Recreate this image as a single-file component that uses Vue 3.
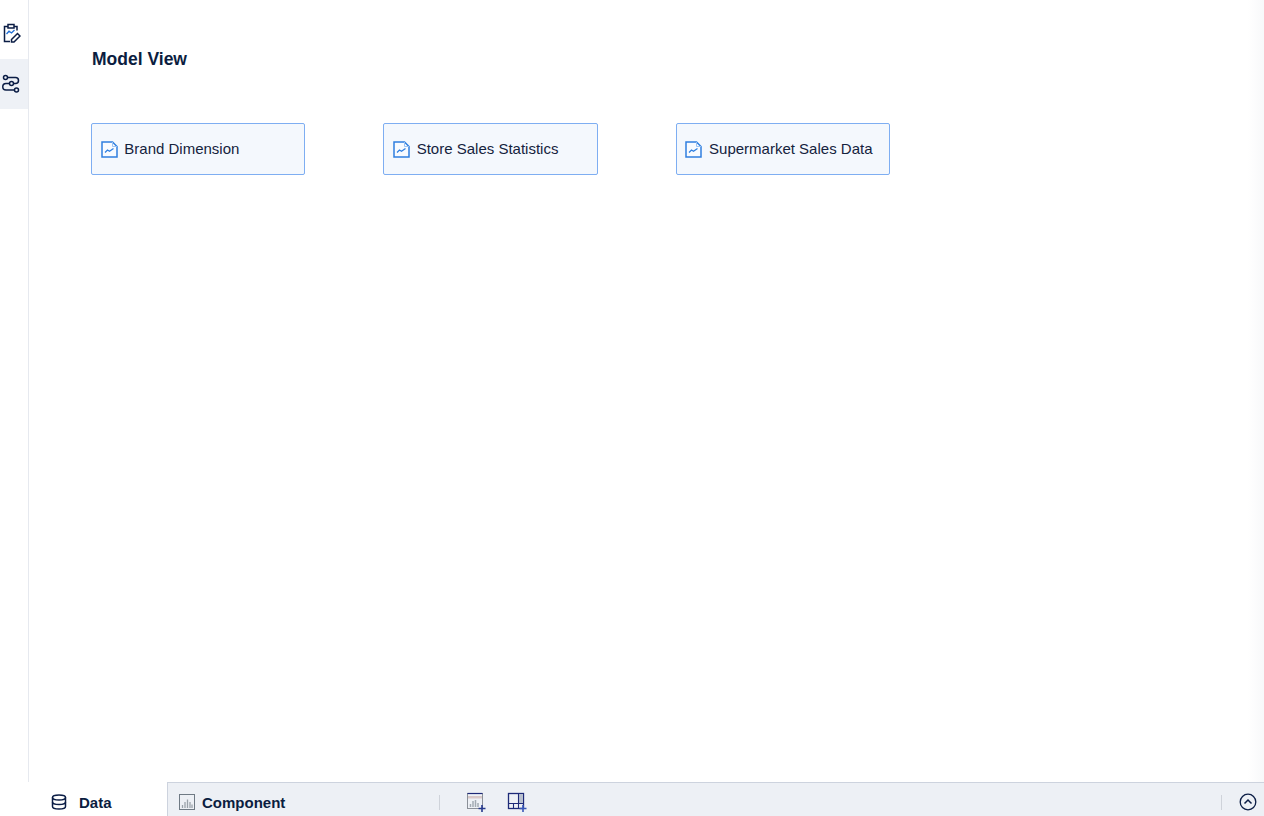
<script setup>
const models = ['Brand Dimension', 'Store Sales Statistics', 'Supermarket Sales Data']
</script>

<template>
  <div class="page">
    <div class="main">
      <aside class="side">
        <div class="side-item top">
          <svg width="20" height="20" viewBox="0 0 20 20" fill="none" stroke="#0b1d45" stroke-width="1.500">
            <path d="M7 3.500H3.500V18.500H9" />
            <path d="M13 3.500H16V7.500" />
            <rect x="7" y="1.500" width="6" height="3.500" />
            <path d="M5.500 11L8 8.200L10.500 10L13.500 7" stroke="#1f6fd6" stroke-width="1.300" />
            <path d="M10.500 16.500L16.500 10.500L19 13L13 19H10.500Z" />
          </svg>
        </div>
        <div class="side-item active">
          <svg width="20" height="20" viewBox="0 0 20 20" fill="none" stroke="#0b1d45" stroke-width="1.500">
            <circle cx="4.500" cy="3.500" r="2" />
            <path d="M6.500 3.500H14.500A3 3 0 0 1 14.500 9.500H12.500" />
            <circle cx="10.500" cy="9.500" r="2" />
            <path d="M8.500 9.500H5A3.200 3.200 0 0 0 5 16H13.500" />
            <circle cx="15.500" cy="16" r="2" />
          </svg>
        </div>
      </aside>
      <main class="content">
        <h1 class="title">Model View</h1>
        <div class="cards">
          <div v-for="m in models" :key="m" class="card">
            <svg class="card-icon" width="17" height="17" viewBox="0 0 17 17" fill="none">
              <path d="M1 1H11.500L16 5.500V16H1Z" fill="#f8fbff" stroke="#2f7fe0" stroke-width="1.500" />
              <path d="M11.500 1V5.500H16" stroke="#9cc3f2" stroke-width="1" />
              <path d="M4 11.500L6.500 9L8.500 10.200L12.500 7.500" stroke="#2f7fe0" stroke-width="1.300" />
            </svg>
            <span class="card-label">{{ m }}</span>
          </div>
        </div>
      </main>
    </div>
    <footer class="bar">
      <div class="tab tab-data">
        <svg class="data-icon" width="16" height="16" viewBox="0 0 16 16" fill="none" stroke="#0b1d45" stroke-width="1.500">
          <ellipse cx="8" cy="3.500" rx="6.500" ry="2.500" />
          <path d="M1.500 3.500V12.500C1.500 14 4.500 15 8 15S14.500 14 14.500 12.500V3.500" />
          <path d="M1.500 8C1.500 9.500 4.500 10.500 8 10.500S14.500 9.500 14.500 8" />
        </svg>
        <span>Data</span>
      </div>
      <div class="tools">
        <div class="tab tab-comp">
          <svg width="16" height="16" viewBox="0 0 16 16" fill="none">
            <rect x="0.500" y="0.500" width="15" height="15" stroke="#6f7a84" />
            <path d="M3.500 14V11M6 14V8M8.500 14V5.500M11 14V8M13 14V10.500" stroke="#9aa2aa" stroke-width="1.300" />
          </svg>
          <span>Component</span>
        </div>
        <div class="sep sep-a"></div>
        <svg class="tool-icon first" width="20" height="20" viewBox="0 0 20 20" fill="none">
          <rect x="1.500" y="1.500" width="15" height="15" fill="#eef1f6" stroke="#8b9098" />
          <path d="M1.500 1.500H16.500" stroke="#1e2a78" stroke-width="1.200" />
          <rect x="2" y="4" width="14" height="2.500" fill="#d9c9c9" />
          <path d="M4.500 15V12M7 15V9M9.500 15V8M12 15V11" stroke="#a3abb3" stroke-width="1.500" />
          <path d="M12.500 16.500H19.500M16 13V20" stroke="#26398c" stroke-width="1.600" />
        </svg>
        <svg class="tool-icon" width="20" height="20" viewBox="0 0 20 20" fill="none">
          <rect x="1.500" y="1.500" width="15" height="15" fill="#eef1f6" stroke="#1e2a78" stroke-width="1.300" />
          <rect x="11.500" y="2" width="4.500" height="10" fill="#b9c0cf" />
          <path d="M11.500 1.500V16.500M1.500 11.500H16.500M6.500 11.500V16.500" stroke="#1e2a78" stroke-width="1.100" />
          <path d="M12.500 16.500H19.500M16 13V20" stroke="#3a58b8" stroke-width="1.600" />
        </svg>
        <div class="spacer"></div>
        <div class="sep"></div>
        <svg class="collapse" width="18" height="18" viewBox="0 0 18 18" fill="none">
          <circle cx="9" cy="9" r="7.800" stroke="#0b1d45" stroke-width="1.300" />
          <path d="M5.500 10.500L9 7L12.500 10.500" stroke="#0b1d45" stroke-width="1.500" />
        </svg>
      </div>
    </footer>
    <div class="edge-shade"></div>
  </div>
</template>

<style scoped>
.page {
  position: relative;
  display: flex;
  flex-direction: column;
  height: 816px;
  overflow: hidden;
  background: #fff;
  font-family: "Liberation Sans", Arial, sans-serif;
  color: #0b1d3f;
}
.main {
  flex: 1;
  display: flex;
  min-height: 0;
}
.side {
  width: 28px;
  flex: none;
  padding-top: 9px;
  border-right: 1px solid #e6e9ef;
}
.side-item {
  box-sizing: border-box;
  height: 50px;
  display: flex;
  align-items: center;
  padding-left: 1px;
}
.side-item.top {
  padding-bottom: 2px;
}
.side-item.active {
  background: #eef1f6;
}
.content {
  flex: 1;
  padding: 49px 0 0 63px;
}
.title {
  margin: 0;
  font-size: 17.500px;
  line-height: 20px;
  font-weight: 700;
  color: #0b1d3f;
}
.cards {
  display: flex;
  gap: 78px;
  margin: 54px 0 0 -1px;
}
.card {
  display: flex;
  align-items: center;
  box-sizing: border-box;
  width: 214.400px;
  height: 52px;
  padding-left: 8.500px;
  background: #f4f8fd;
  border: 1px solid #7eaef2;
  border-radius: 2px;
}
.card-icon {
  flex: none;
}
.card-label {
  margin: 0 0 2px 6.800px;
  font-size: 15px;
  color: #15233d;
}
.bar {
  flex: none;
  display: flex;
  height: 34px;
}
.tab {
  display: flex;
  align-items: center;
  font-size: 15px;
  font-weight: 700;
  color: #0b1d3f;
}
.tab-data {
  width: 167px;
  flex: none;
  box-sizing: border-box;
  padding: 7px 0 0 51px;
  gap: 12px;
  background: #fff;
}
.data-icon {
  margin-bottom: 2px;
}
.tools {
  flex: 1;
  display: flex;
  align-items: center;
  padding-top: 5px;
  background: #edf0f5;
  border-top: 1px solid #cdd3de;
  border-left: 1px solid #cdd3de;
  box-sizing: border-box;
}
.tab-comp {
  gap: 7px;
  padding-left: 11px;
}
.sep {
  width: 1px;
  height: 15px;
  background: #cfd3da;
}
.sep-a {
  margin-left: 154px;
}
.tool-icon.first {
  margin-left: 26px;
}
.tool-icon {
  margin-right: 21px;
}
.tool-icon + .tool-icon {
  margin-right: 0;
}
.spacer {
  flex: 1;
}
.collapse {
  margin: 0 7px 0 17px;
}
.edge-shade {
  position: absolute;
  top: 0;
  right: 0;
  bottom: 34px;
  width: 16px;
  background: linear-gradient(to right, rgba(240, 242, 245, 0), rgba(240, 242, 245, 0.500));
  pointer-events: none;
}
</style>
